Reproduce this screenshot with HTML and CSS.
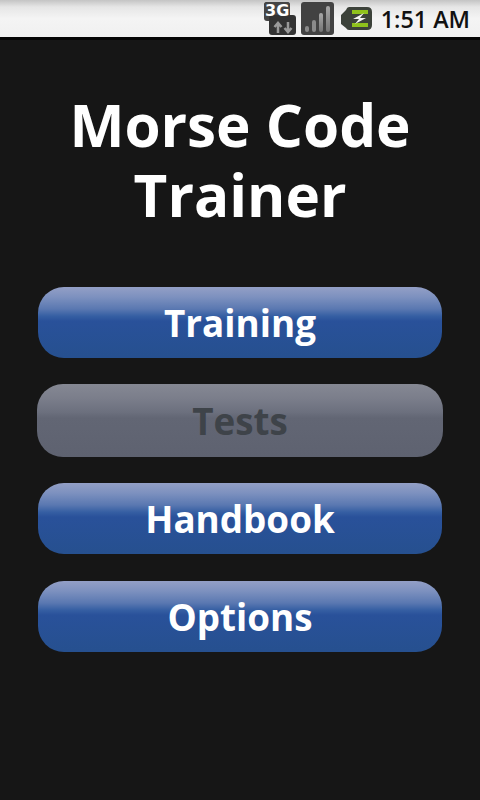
FILE: index.html
```html
<html>
    <head>
        <link rel="stylesheet" href="styles.css">
    </head>
    <body>
        <div class="status-bar">
            <svg class="icon-3g" width="32" height="33" viewBox="0 0 32 33">
                <rect x="0" y="0" width="26" height="19" rx="3" fill="#454545"/>
                <rect x="5" y="13" width="27" height="20" rx="3" fill="#333"/>
                <rect x="0" y="0" width="26" height="13" rx="3" fill="#454545"/>
                <text x="1" y="14" class="icon-3g-text">3G</text>
                <path d="M14 31v-10M10.500 25l3.500-4 3.500 4" class="arrow"/>
                <path d="M24 20v10M20.500 26l3.500 4 3.500-4" class="arrow"/>
            </svg>
            <svg class="icon-signal" width="33" height="33" viewBox="0 0 33 33">
                <defs>
                    <linearGradient id="bar" x1="0" y1="0" x2="0" y2="1">
                        <stop offset="0" stop-color="#a8a8a8"/>
                        <stop offset="1" stop-color="#747474"/>
                    </linearGradient>
                </defs>
                <rect x="0" y="0" width="33" height="33" rx="3" fill="#424242"/>
                <rect x="4" y="24" width="4" height="6" rx="2" fill="#8a8a8a"/>
                <rect x="11" y="18" width="4" height="12" rx="2" fill="#8a8a8a"/>
                <rect x="18" y="11" width="4" height="19" rx="2" fill="url(#bar)"/>
                <rect x="25" y="4" width="4" height="26" rx="2" fill="url(#bar)"/>
            </svg>
            <svg class="icon-battery" width="31" height="25" viewBox="0 0 31 25">
                <path d="M8 1h18q5 0 5 5v13q0 5-5 5H8q-2 0-3-2l-5-4V9l5-5q1-3 3-3z" fill="#3c423a"/>
                <rect x="11" y="4" width="16" height="4" fill="#8fc21c"/>
                <rect x="11" y="17" width="16" height="4" fill="#8fc21c"/>
                <path d="M23 7l-11 6h6l-4 5 11-6h-6z" fill="#f4f4f4"/>
            </svg>
            <span class="clock">1:51 AM</span>
        </div>
        <div class="main">
            <h1>Morse Code<br>Trainer</h1>
            <div class="menu">
                <button class="menu-btn">Training</button>
                <button class="menu-btn disabled">Tests</button>
                <button class="menu-btn">Handbook</button>
                <button class="menu-btn">Options</button>
            </div>
        </div>
    </body>
</html>
```

FILE: styles.css
```css
html, body {
    margin: 0;
    padding: 0;
    height: 800px;
    overflow: hidden;
}
body {
    background: #161616;
    font-family: "Open Sans", "DejaVu Sans", sans-serif;
}
.status-bar {
    height: 37px;
    border-bottom: 3px solid #050505;
    background: linear-gradient(#c4c4c4 0, #e6e6e6 7px, #f4f4f4 50%, #f0f0f0 100%);
    display: flex;
    align-items: center;
    justify-content: flex-end;
    padding-right: 10px;
}
.icon-3g {
    margin-right: 5px;
}
.icon-3g-text {
    font-family: "DejaVu Sans", sans-serif;
    font-weight: bold;
    font-size: 16px;
    fill: #fff;
}
.arrow {
    fill: none;
    stroke: #9a9a9a;
    stroke-width: 2.500;
}
.icon-signal {
    margin-right: 7px;
}
.icon-battery {
    margin-right: 9px;
}
.clock {
    font-size: 23.300px;
    font-weight: 600;
    color: #111;
}
.main {
    padding-top: 50px;
}
h1 {
    margin: 0;
    color: #fff;
    text-align: center;
    font-size: 58.400px;
    line-height: 70px;
    font-weight: 700;
}
.menu {
    margin-top: 57px;
    padding: 0 38px;
    display: flex;
    flex-direction: column;
    gap: 27px;
}
.menu-btn {
    height: 71px;
    border: 0;
    border-radius: 26px;
    padding: 1px 0 0;
    font-family: inherit;
    font-size: 36.800px;
    font-weight: 700;
    color: #fff;
    background: linear-gradient(#939fc6 0, #7d91bf 10px, #5a78b1 22px, #365fa3 29px, #29519a 34px, #26508f 100%);
}
.menu-btn.disabled {
    margin: -1px;
    height: 73px;
    color: #3e4349;
    background: linear-gradient(#858893 0, #7b7e8b 14px, #6c707e 28px, #626674 34px, #5e6270 100%);
}
```
